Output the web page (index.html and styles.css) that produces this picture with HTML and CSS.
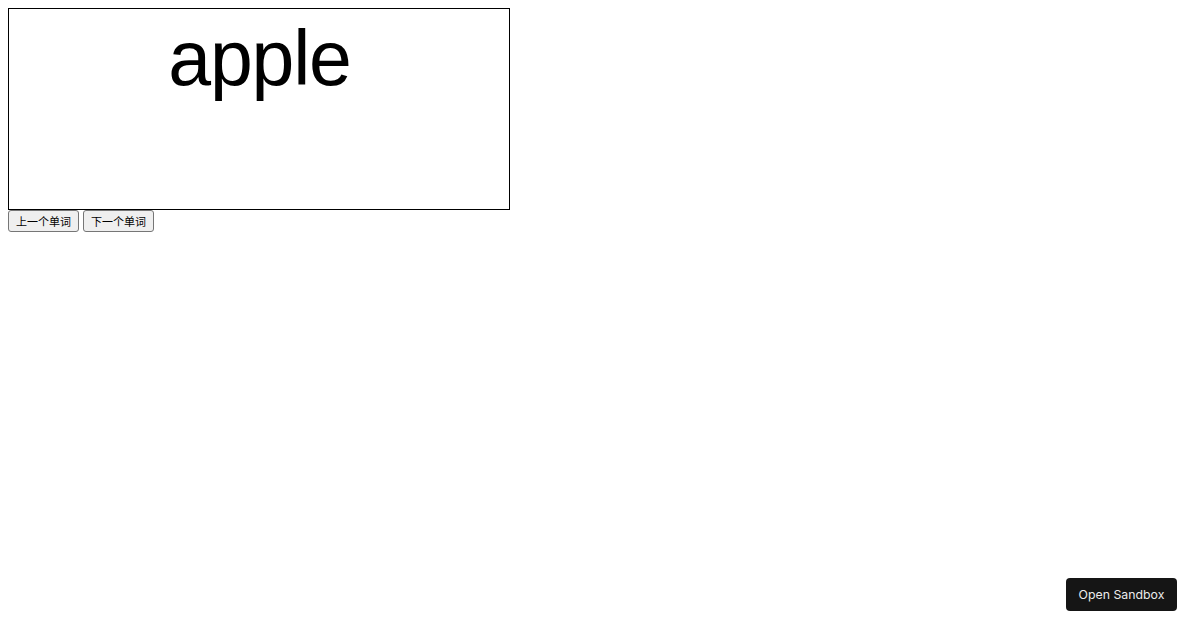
FILE: index.html
```html
<!DOCTYPE html>
<html lang="zh">
<head>
<meta charset="utf-8">
<title>apple</title>
<link rel="stylesheet" href="styles.css">
</head>
<body>
<div class="card"><span class="word">apple</span></div>
<div class="controls"><button class="nav-btn">上一个单词</button> <button class="nav-btn">下一个单词</button></div>
<a class="sandbox-btn">Open Sandbox</a>
</body>
</html>
```
FILE: styles.css
```css
body {
  margin: 8px;
  font-family: "Liberation Sans", Arial, sans-serif;
  background: #fff;
}
.card {
  width: 500px;
  height: 200px;
  border: 1px solid #000;
  display: flex;
  justify-content: center;
  align-items: flex-start;
}
.word {
  font-family: "Liberation Sans", Arial, sans-serif;
  font-size: 77px;
  line-height: 98px;
  color: #000;
  letter-spacing: -1.2px;
  padding-left: 1px;
}
.controls {
  font-size: 0;
}
.controls .nav-btn + .nav-btn {
  margin-left: 4px;
}
.nav-btn {
  font-family: "Noto Sans CJK SC", sans-serif;
  font-size: 11px;
  line-height: 15px;
  height: 22px;
  padding: 1px 7px;
  color: #000;
  background: #efefef;
  border: 1px solid #767676;
  border-radius: 3px;
  vertical-align: top;
}
.sandbox-btn {
  position: fixed;
  right: 23px;
  bottom: 19px;
  width: 111px;
  height: 33px;
  box-sizing: border-box;
  display: flex;
  align-items: center;
  justify-content: center;
  background: #151515;
  color: #ececec;
  border-radius: 4px;
  font-family: Inter, "Liberation Sans", sans-serif;
  font-size: 12.3px;
}
```
